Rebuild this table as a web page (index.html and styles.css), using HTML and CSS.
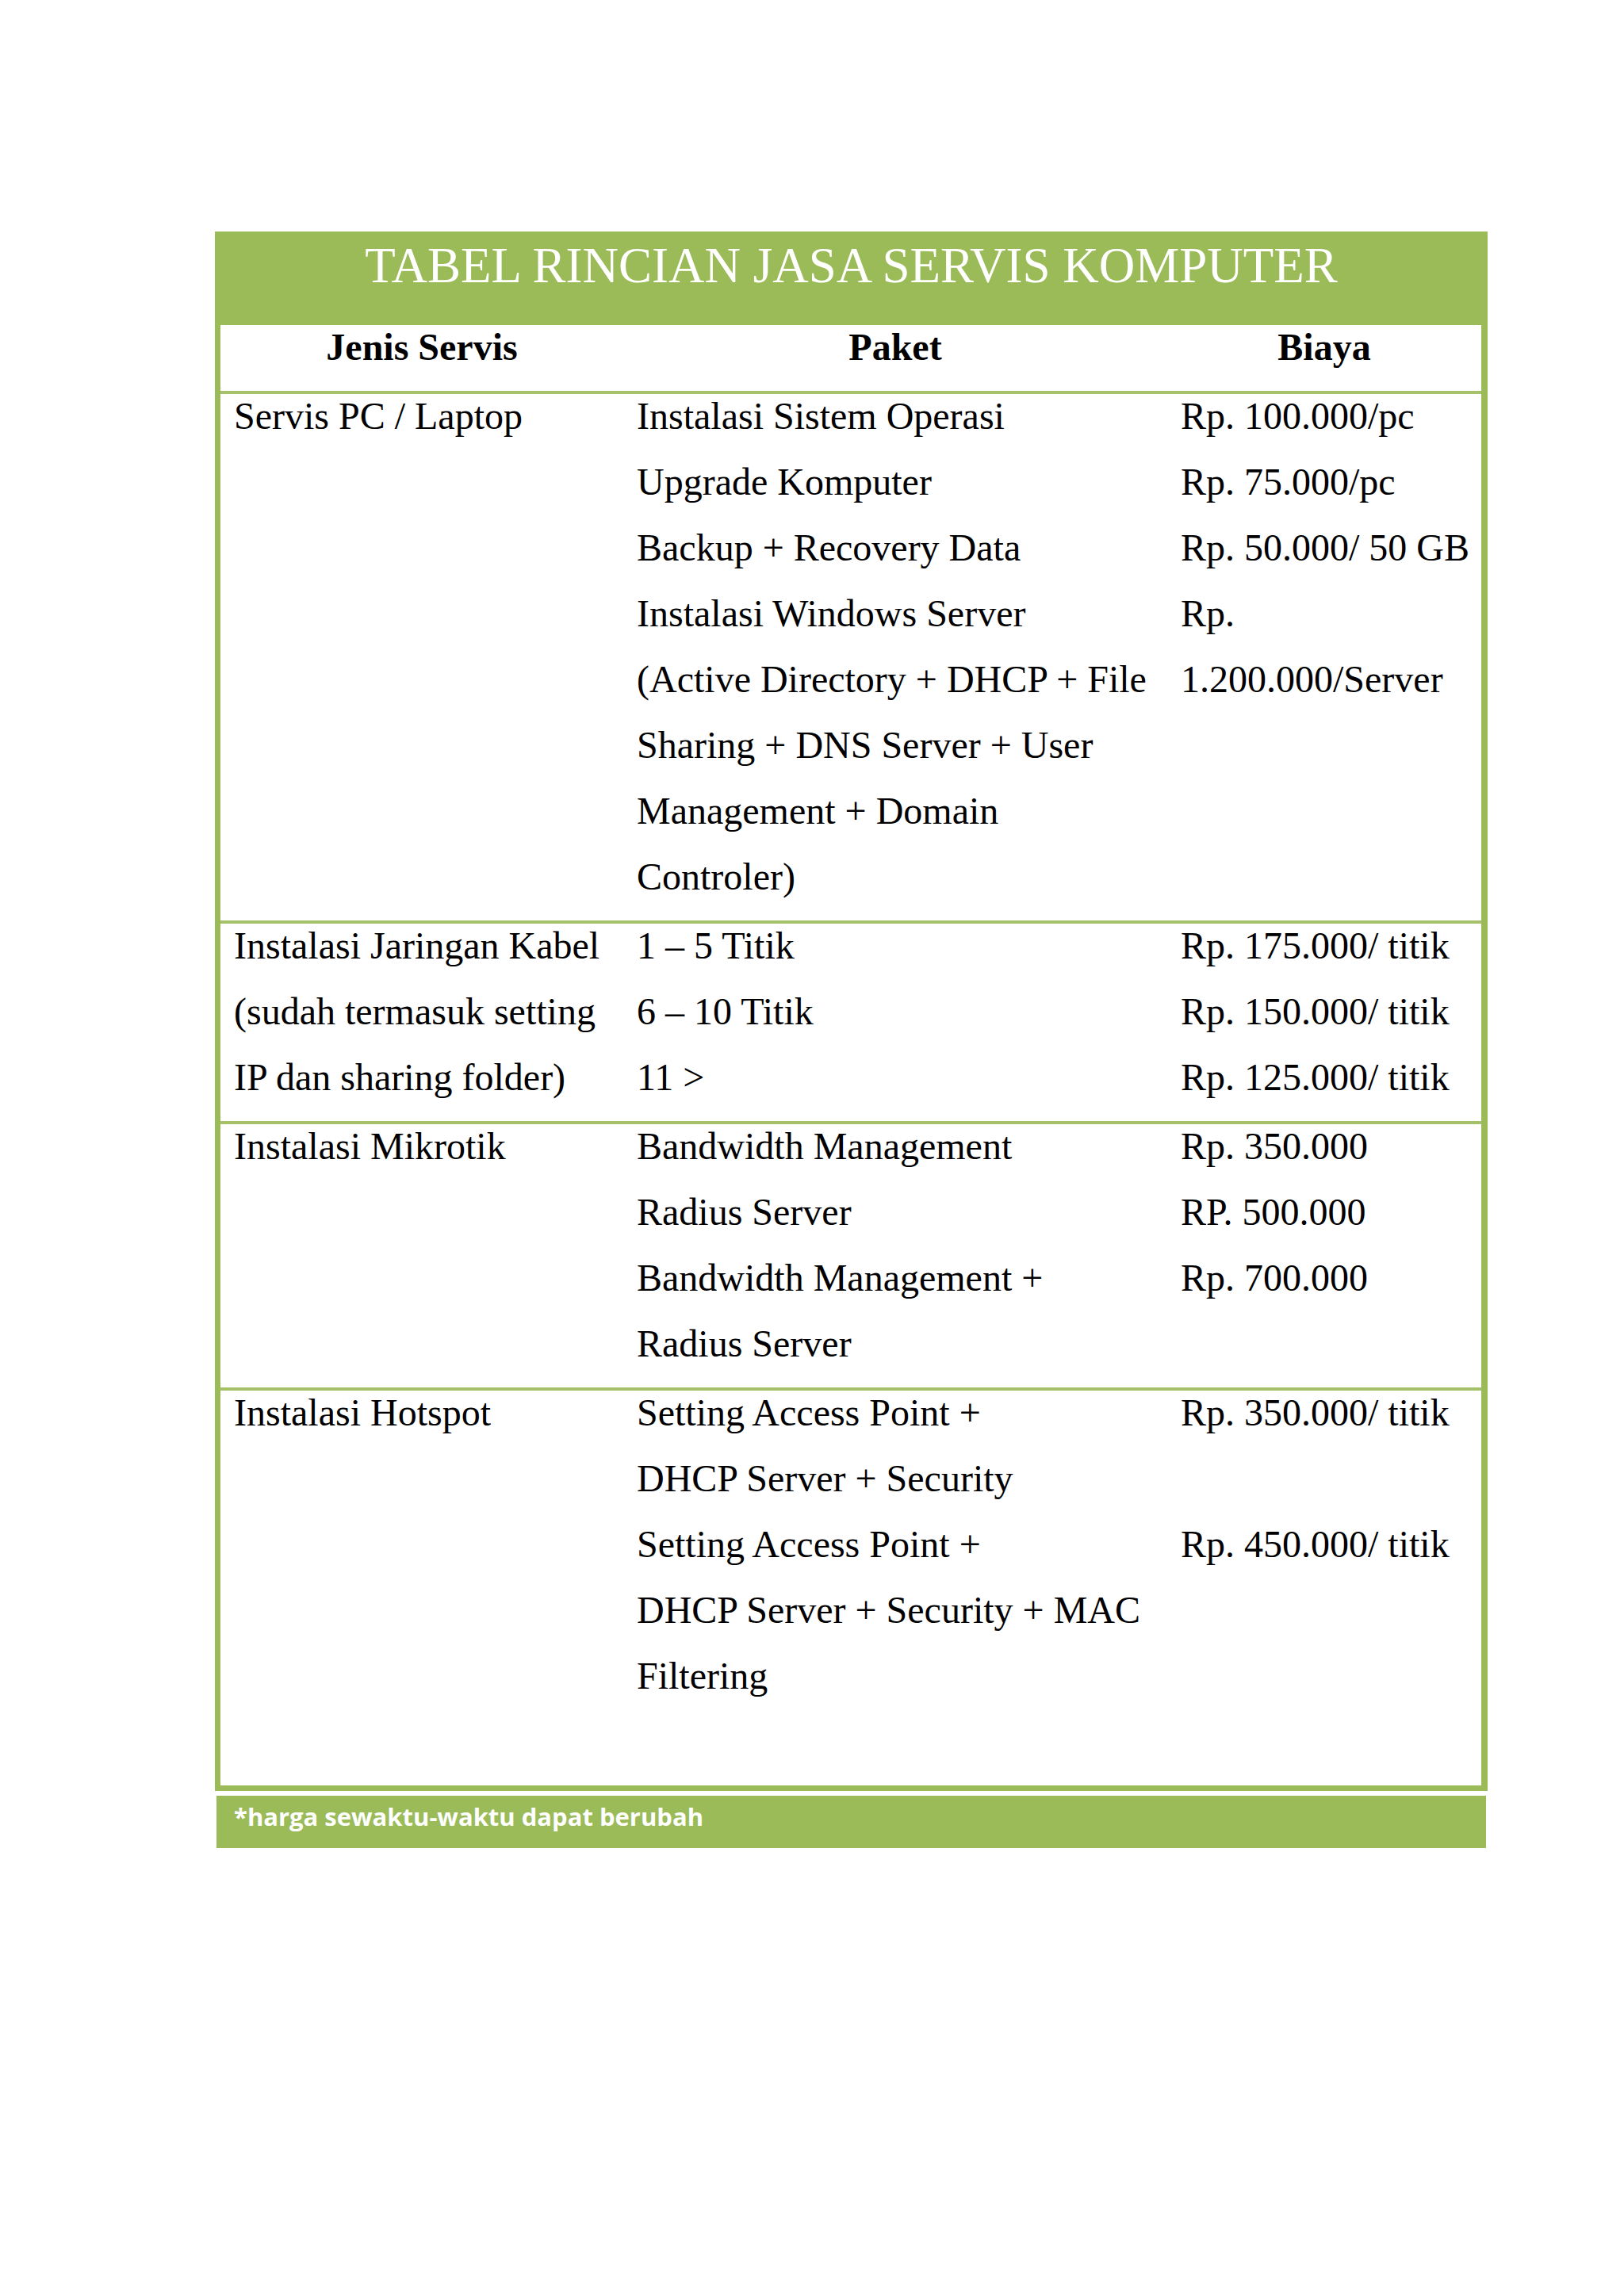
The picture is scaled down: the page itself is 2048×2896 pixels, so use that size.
FILE: index.html
```html
<!DOCTYPE html>
<html lang="id">
<head>
<meta charset="utf-8">
<title>Tabel Rincian Jasa Servis Komputer</title>
<link rel="stylesheet" href="styles.css">
</head>
<body>
<div class="page">
  <div class="sheet">
    <div class="title">TABEL RINCIAN JASA SERVIS KOMPUTER</div>
    <div class="table">
      <div class="row head">
        <div class="cell"><p>Jenis Servis</p></div>
        <div class="cell"><p>Paket</p></div>
        <div class="cell"><p>Biaya</p></div>
      </div>
      <div class="row">
        <div class="cell"><p>Servis PC / Laptop</p></div>
        <div class="cell"><p>Instalasi Sistem Operasi<br>Upgrade Komputer<br>Backup + Recovery Data<br>Instalasi Windows Server<br>(Active Directory + DHCP + File<br>Sharing + DNS Server + User<br>Management + Domain<br>Controler)</p></div>
        <div class="cell"><p>Rp. 100.000/pc<br>Rp. 75.000/pc<br>Rp. 50.000/ 50 GB<br>Rp.<br>1.200.000/Server</p></div>
      </div>
      <div class="row">
        <div class="cell"><p>Instalasi Jaringan Kabel<br>(sudah termasuk setting<br>IP dan sharing folder)</p></div>
        <div class="cell"><p>1 – 5 Titik<br>6 – 10 Titik<br>11 &gt;</p></div>
        <div class="cell"><p>Rp. 175.000/ titik<br>Rp. 150.000/ titik<br>Rp. 125.000/ titik</p></div>
      </div>
      <div class="row">
        <div class="cell"><p>Instalasi Mikrotik</p></div>
        <div class="cell"><p>Bandwidth Management<br>Radius Server<br>Bandwidth Management +<br>Radius Server</p></div>
        <div class="cell"><p>Rp. 350.000<br>RP. 500.000<br>Rp. 700.000</p></div>
      </div>
      <div class="row row-last">
        <div class="cell"><p>Instalasi Hotspot</p></div>
        <div class="cell"><p>Setting Access Point +<br>DHCP Server + Security<br>Setting Access Point +<br>DHCP Server + Security + MAC<br>Filtering<br>&nbsp;</p></div>
        <div class="cell"><p>Rp. 350.000/ titik<br>&nbsp;<br>Rp. 450.000/ titik</p></div>
      </div>
    </div>
  </div>
  <div class="note">*harga sewaktu-waktu dapat berubah</div>
</div>
</body>
</html>
```

FILE: styles.css
```css
html, body {
  margin: 0;
  padding: 0;
  background: #ffffff;
}

.page {
  width: 2048px;
  min-height: 2896px;
  padding-top: 292px;
  box-sizing: border-box;
  font-family: "Liberation Serif", "Times New Roman", serif;
  color: #000000;
}

.sheet {
  margin-left: 271px;
  width: 1605px;
}

.title {
  box-sizing: border-box;
  height: 118px;
  padding-top: 8px;
  background: #9bbb59;
  color: #ffffff;
  font-size: 63px;
  line-height: 70px;
  text-align: center;
  white-space: nowrap;
}

.table {
  border-left: 7px solid #9bbb59;
  border-right: 8px solid #9bbb59;
  border-bottom: 7px solid #9bbb59;
  background: #ffffff;
}

.row {
  display: grid;
  grid-template-columns: 508px 686px 396px;
  border-bottom: 4px solid #a5c26a;
}

.row.row-last {
  border-bottom: none;
}

.cell {
  padding: 0 17px;
  font-size: 48px;
  line-height: 83px;
  white-space: nowrap;
}

.cell p {
  margin: -14px 0 14px 0;
}

.head .cell {
  font-weight: bold;
  text-align: center;
}

.note {
  margin-left: 273px;
  margin-top: 6px;
  width: 1601px;
  height: 66px;
  box-sizing: border-box;
  padding: 5px 0 0 22px;
  background: #9bbb59;
  color: #ffffff;
  font-family: "Open Sans", "Liberation Sans", sans-serif;
  font-weight: bold;
  font-size: 31px;
  line-height: normal;
  white-space: nowrap;
}
```
